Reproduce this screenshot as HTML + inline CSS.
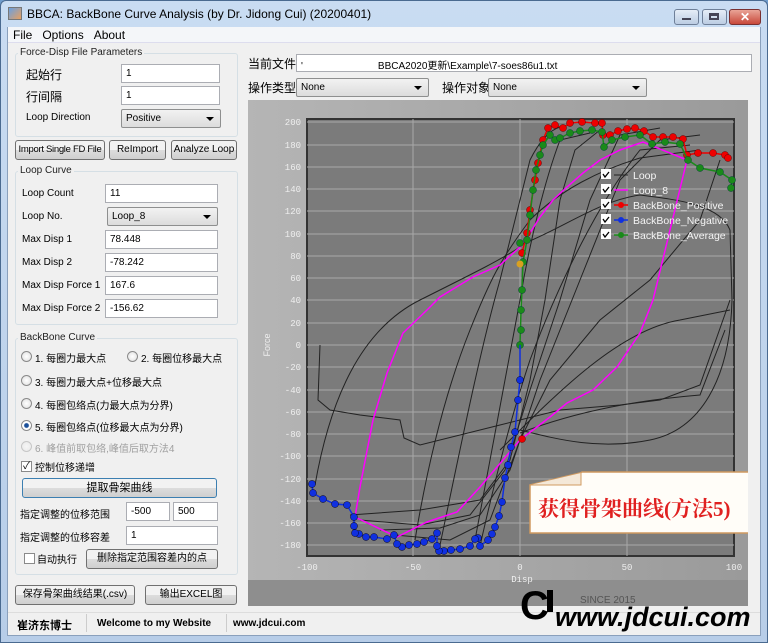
<!DOCTYPE html>
<html><head><meta charset="utf-8"><style>
*{box-sizing:border-box;margin:0;padding:0}
body{width:768px;height:643px;overflow:hidden;background:#6f9ccc;font-family:"Liberation Sans","Noto Sans CJK SC",sans-serif;font-size:11px;color:#000;position:relative}
.a{position:absolute}
.win{left:0;top:0;width:768px;height:643px;background:linear-gradient(#c9dcf2,#b7cde8);border:1px solid #4a6a90;border-radius:6px 6px 0 0}
.client{left:7px;top:27px;width:754px;height:609px;background:#f0f0f0;border:1px solid #8aa0bc}
.inp{position:absolute;background:#fff;border:1px solid #abadb3;height:19px;padding:3px 4px;font-size:10px}
.cmb{position:absolute;border:1px solid #8e8f8f;border-radius:2px;height:19px;padding:3px 4px;font-size:10px;background:linear-gradient(#f2f2f2,#dcdcdc)}
.cmb:after{content:"";position:absolute;right:6px;top:7px;border:4px solid transparent;border-top:4px solid #000}
.btn{position:absolute;border:1px solid #707070;border-radius:3px;background:linear-gradient(#f2f2f2 50%,#dddddd 50%,#cfcfcf);height:20px;text-align:center;line-height:18px;font-size:10px;white-space:nowrap;overflow:hidden}
.grp{position:absolute;border:1px solid #d5dfe5;border-radius:3px}
.gl{position:absolute;background:#f0f0f0;padding:0 2px;font-size:10px;color:#222}
.lb{position:absolute;font-size:10px;white-space:nowrap}
.cn{font-size:12px}
.rd{position:absolute;width:11px;height:11px;border-radius:50%;border:1px solid #8a8a8a;background:radial-gradient(#fff,#ddd)}
.cb{position:absolute;width:11px;height:11px;border:1px solid #8a8a8a;background:#fff}
</style></head><body>
<div class="a win"></div>
<div class="a" style="left:8px;top:7px;width:14px;height:13px;background:linear-gradient(135deg,#6aa0e0,#e8a060);border:1px solid #777"></div>
<div class="a" style="left:27px;top:7px;font-size:12px;color:#000">BBCA: BackBone Curve Analysis (by Dr. Jidong Cui) (20200401)</div>
<div class="a" style="left:674px;top:9px;width:25px;height:16px;border:1px solid #6e7f98;border-radius:3px;background:linear-gradient(#e5edf7,#bccde3)"></div>
<div class="a" style="left:682px;top:18px;width:9px;height:2px;background:#fff;border:1px solid #445"></div>
<div class="a" style="left:702px;top:9px;width:25px;height:16px;border:1px solid #6e7f98;border-radius:3px;background:linear-gradient(#e5edf7,#bccde3)"></div>
<div class="a" style="left:709px;top:13px;width:10px;height:7px;border:2px solid #445;border-top-width:3px"></div>
<div class="a" style="left:729px;top:9px;width:32px;height:16px;border:1px solid #7a3030;border-radius:3px;background:linear-gradient(#e9a497,#c8483a);color:#fff;font-weight:bold;text-align:center;line-height:14px;font-size:12px">✕</div>
<div class="a client"></div>
<div class="a" style="left:8px;top:27px;width:752px;height:16px;background:#f4f6f9;border-bottom:1px solid #dde"></div>
<div class="a" style="left:13px;top:28px;font-size:12px">File&nbsp;&nbsp;&nbsp;Options&nbsp;&nbsp;&nbsp;About</div>

<div class="grp" style="left:15px;top:53px;width:223px;height:84px"></div>
<div class="gl" style="left:18px;top:47px">Force-Disp File Parameters</div>
<div class="lb cn" style="left:26px;top:66px">起始行</div><div class="inp" style="left:121px;top:64px;width:99px">1</div>
<div class="lb cn" style="left:26px;top:88px">行间隔</div><div class="inp" style="left:121px;top:86px;width:99px">1</div>
<div class="lb" style="left:26px;top:112px">Loop Direction</div><div class="cmb" style="left:121px;top:109px;width:100px">Positive</div>
<div class="btn" style="left:15px;top:140px;width:90px;font-size:9.5px;letter-spacing:-0.3px">Import Single FD File</div>
<div class="btn" style="left:109px;top:140px;width:57px">ReImport</div>
<div class="btn" style="left:171px;top:140px;width:66px">Analyze Loop</div>

<div class="grp" style="left:15px;top:171px;width:223px;height:154px"></div>
<div class="gl" style="left:18px;top:165px">Loop Curve</div>
<div class="lb" style="left:22px;top:188px">Loop Count</div><div class="inp" style="left:105px;top:184px;width:113px">11</div>
<div class="lb" style="left:22px;top:211px">Loop No.</div><div class="cmb" style="left:107px;top:207px;width:111px">Loop_8</div>
<div class="lb" style="left:22px;top:234px">Max Disp 1</div><div class="inp" style="left:105px;top:230px;width:113px">78.448</div>
<div class="lb" style="left:22px;top:257px">Max Disp 2</div><div class="inp" style="left:105px;top:253px;width:113px">-78.242</div>
<div class="lb" style="left:22px;top:280px">Max Disp Force 1</div><div class="inp" style="left:105px;top:276px;width:113px">167.6</div>
<div class="lb" style="left:22px;top:303px">Max Disp Force 2</div><div class="inp" style="left:105px;top:299px;width:113px">-156.62</div>

<div class="grp" style="left:15px;top:338px;width:223px;height:237px"></div>
<div class="gl" style="left:18px;top:332px">BackBone Curve</div>
<div class="rd" style="left:21px;top:351px"></div><div class="lb" style="left:35px;top:350px">1. 每圈力最大点</div>
<div class="rd" style="left:127px;top:351px"></div><div class="lb" style="left:141px;top:350px">2. 每圈位移最大点</div>
<div class="rd" style="left:21px;top:375px"></div><div class="lb" style="left:35px;top:374px">3. 每圈力最大点+位移最大点</div>
<div class="rd" style="left:21px;top:398px"></div><div class="lb" style="left:35px;top:397px">4. 每圈包络点(力最大点为分界)</div>
<div class="rd" style="left:21px;top:420px;background:radial-gradient(#1a4f9a 30%,#fff 45%)"></div><div class="lb" style="left:35px;top:419px">5. 每圈包络点(位移最大点为分界)</div>
<div class="rd" style="left:21px;top:441px;opacity:.4"></div><div class="lb" style="left:35px;top:440px;color:#a0a0a0">6. 峰值前取包络,峰值后取方法4</div>
<div class="cb" style="left:21px;top:461px;font-size:10px;line-height:9px;text-align:center">✓</div><div class="lb" style="left:35px;top:459px">控制位移递增</div>
<div class="btn" style="left:22px;top:478px;width:195px;border-color:#3c7fb1;font-size:11px">提取骨架曲线</div>
<div class="lb" style="left:20px;top:506px">指定调整的位移范围</div>
<div class="inp" style="left:126px;top:502px;width:44px">-500</div><div class="inp" style="left:173px;top:502px;width:45px">500</div>
<div class="lb" style="left:20px;top:529px">指定调整的位移容差</div>
<div class="inp" style="left:126px;top:526px;width:92px">1</div>
<div class="cb" style="left:24px;top:553px"></div><div class="lb" style="left:37px;top:551px">自动执行</div>
<div class="btn" style="left:86px;top:549px;width:132px">删除指定范围容差内的点</div>
<div class="btn" style="left:15px;top:585px;width:120px">保存骨架曲线结果(.csv)</div>
<div class="btn" style="left:145px;top:585px;width:92px">输出EXCEL图</div>

<div class="lb cn" style="left:248px;top:55px">当前文件</div>
<div class="inp" style="left:296px;top:54px;width:456px;height:18px;padding:2px 4px">'<span style="margin-left:75px">BBCA2020更新\Example\7-soes86u1.txt</span></div>
<div class="lb cn" style="left:248px;top:79px">操作类型</div>
<div class="cmb" style="left:296px;top:78px;width:133px">None</div>
<div class="lb cn" style="left:442px;top:79px">操作对象</div>
<div class="cmb" style="left:488px;top:78px;width:159px">None</div>

<svg class="a" style="left:248px;top:100px" width="500" height="506" viewBox="248 100 500 506">
<defs><linearGradient id="bg" x1="0" x2="1"><stop offset="0" stop-color="#b5b5b5"/><stop offset="1" stop-color="#9a9a9a"/></linearGradient></defs>
<rect x="248" y="100" width="500" height="506" fill="url(#bg)"/>
<rect x="248" y="580" width="500" height="26" fill="#8e8e8e"/>
<rect x="307" y="119" width="427" height="437" fill="#7b7b7b" stroke="#333" stroke-width="2"/>
<g stroke="#a8a8a8" stroke-width="1">
<line x1="413" y1="119" x2="413" y2="556"/><line x1="520" y1="119" x2="520" y2="556"/><line x1="627" y1="119" x2="627" y2="556"/>
<line x1="307" y1="122" x2="734" y2="122"/><line x1="307" y1="145" x2="734" y2="145"/><line x1="307" y1="167" x2="734" y2="167"/><line x1="307" y1="189" x2="734" y2="189"/><line x1="307" y1="211" x2="734" y2="211"/><line x1="307" y1="234" x2="734" y2="234"/><line x1="307" y1="256" x2="734" y2="256"/><line x1="307" y1="278" x2="734" y2="278"/><line x1="307" y1="300" x2="734" y2="300"/><line x1="307" y1="323" x2="734" y2="323"/><line x1="307" y1="345" x2="734" y2="345"/><line x1="307" y1="367" x2="734" y2="367"/><line x1="307" y1="390" x2="734" y2="390"/><line x1="307" y1="412" x2="734" y2="412"/><line x1="307" y1="434" x2="734" y2="434"/><line x1="307" y1="456" x2="734" y2="456"/><line x1="307" y1="479" x2="734" y2="479"/><line x1="307" y1="501" x2="734" y2="501"/><line x1="307" y1="523" x2="734" y2="523"/><line x1="307" y1="545" x2="734" y2="545"/>
</g>
<g fill="#eee" font-size="9" font-family="Liberation Mono,monospace" text-anchor="end">
<text x="301" y="125">200</text><text x="301" y="148">180</text><text x="301" y="170">160</text><text x="301" y="192">140</text><text x="301" y="214">120</text><text x="301" y="237">100</text><text x="301" y="259">80</text><text x="301" y="281">60</text><text x="301" y="303">40</text><text x="301" y="326">20</text><text x="301" y="348">0</text><text x="301" y="370">-20</text><text x="301" y="393">-40</text><text x="301" y="415">-60</text><text x="301" y="437">-80</text><text x="301" y="459">-100</text><text x="301" y="482">-120</text><text x="301" y="504">-140</text><text x="301" y="526">-160</text><text x="301" y="548">-180</text>
</g>
<g fill="#eee" font-size="9" font-family="Liberation Mono,monospace" text-anchor="middle">
<text x="307" y="570">-100</text><text x="413" y="570">-50</text><text x="520" y="570">0</text><text x="627" y="570">50</text><text x="734" y="570">100</text><text x="522" y="582">Disp</text>
</g>
<text x="270" y="345" fill="#eee" font-size="9" transform="rotate(-90 270 345)" text-anchor="middle">Force</text>
<g fill="none" stroke="#222" stroke-width="1">
<path d="M320,345 L318,400 L330,410 L360,415 L400,420 L404,438 L420,445 L500,425 L560,410 L620,405 L660,400 L700,385 L730,300"/>
<path d="M315,485 C330,400 360,330 420,300 C480,270 500,260 520,247"/>
<path d="M350,515 L420,510 L480,500 L510,460 L530,380 L545,300 L560,200 L575,150 L600,130"/>
<path d="M360,520 L420,525 L470,515 L505,470 L530,390 L560,300 L590,200 L620,135 L660,128"/>
<path d="M380,530 L440,528 L480,515 L510,470 L540,380 L580,280 L620,180 L660,140 L700,135"/>
<path d="M395,535 L450,540 L490,520 L520,440 L550,380 L600,320 L650,280 L700,220 L720,160"/>
<path d="M440,545 C460,450 480,350 500,280 C510,240 520,200 530,160 C540,140 550,130 560,127"/>
<path d="M475,540 C490,460 505,380 520,300 C530,240 545,180 560,140 L590,133"/>
<path d="M480,546 C495,480 510,420 530,360 C560,280 600,200 640,150 L690,145"/>
<path d="M415,540 C430,450 450,380 470,330 C490,280 500,260 530,220 C560,190 600,170 640,158 L700,150"/>
<path d="M520,245 C560,230 600,200 640,195 C680,200 720,205 730,230 L732,300 C730,380 700,430 650,440 C600,450 560,440 520,430"/>
<path d="M500,450 C560,390 620,330 680,320 L730,310"/>
<path d="M520,433 C580,410 640,400 700,395 L725,330"/>
</g>
<polyline fill="none" stroke="#ff00ff" stroke-width="1.5" points="520,247 530,233 540,217 553,200 567,187 583,173 600,160 620,150 643,142 687,160 653,300 640,333 617,367 593,390 567,403 550,417 533,430 520,440 503,460 480,487 457,512 427,522 397,537 355,517 360,487 373,420 387,373 403,333 427,310 440,297 473,277 500,265 520,247"/>
<g fill="#e00" stroke="#600" stroke-width=".5">
<polyline fill="none" stroke="#e00" stroke-width="1.5" points="522,253 527,233 530,210 535,180 538,163 543,140 548,128 555,125 563,128 570,123 582,122 595,123 602,123 603,135 610,135 618,131 627,129 635,128 644,131 653,137 663,137 673,137 683,139 687,155 698,153 713,153 725,155 728,158"/>
<circle cx="522" cy="253" r="3.5"/><circle cx="527" cy="233" r="3.5"/><circle cx="530" cy="210" r="3.5"/><circle cx="535" cy="180" r="3.5"/><circle cx="538" cy="163" r="3.5"/><circle cx="543" cy="140" r="3.5"/><circle cx="548" cy="128" r="3.5"/><circle cx="555" cy="125" r="3.5"/><circle cx="563" cy="128" r="3.5"/><circle cx="570" cy="123" r="3.5"/><circle cx="582" cy="122" r="3.5"/><circle cx="595" cy="123" r="3.5"/><circle cx="602" cy="123" r="3.5"/><circle cx="603" cy="135" r="3.5"/><circle cx="610" cy="135" r="3.5"/><circle cx="618" cy="131" r="3.5"/><circle cx="627" cy="129" r="3.5"/><circle cx="635" cy="128" r="3.5"/><circle cx="644" cy="131" r="3.5"/><circle cx="653" cy="137" r="3.5"/><circle cx="663" cy="137" r="3.5"/><circle cx="673" cy="137" r="3.5"/><circle cx="683" cy="139" r="3.5"/><circle cx="687" cy="155" r="3.5"/><circle cx="698" cy="153" r="3.5"/><circle cx="713" cy="153" r="3.5"/><circle cx="725" cy="155" r="3.5"/><circle cx="728" cy="158" r="3.5"/><circle cx="522" cy="439" r="3.5"/>
</g>
<g fill="#1a8a1a" stroke="#043" stroke-width=".5">
<polyline fill="none" stroke="#1a8a1a" stroke-width="1.5" points="520,345 521,310 522,290 523,262 527,240 530,215 533,190 536,170 540,155 543,145 550,135 555,140 560,138 570,133 580,131 592,130 602,132 604,147 612,140 625,137 640,135 652,144 665,142 680,144 688,160 700,168 720,172 732,180 731,188"/>
<circle cx="520" cy="345" r="3.5"/><circle cx="521" cy="330" r="3.5"/><circle cx="521" cy="310" r="3.5"/><circle cx="522" cy="290" r="3.5"/><circle cx="523" cy="262" r="3.5"/><circle cx="527" cy="240" r="3.5"/><circle cx="530" cy="215" r="3.5"/><circle cx="533" cy="190" r="3.5"/><circle cx="536" cy="170" r="3.5"/><circle cx="540" cy="155" r="3.5"/><circle cx="543" cy="145" r="3.5"/><circle cx="550" cy="135" r="3.5"/><circle cx="555" cy="140" r="3.5"/><circle cx="560" cy="138" r="3.5"/><circle cx="570" cy="133" r="3.5"/><circle cx="580" cy="131" r="3.5"/><circle cx="592" cy="130" r="3.5"/><circle cx="602" cy="132" r="3.5"/><circle cx="604" cy="147" r="3.5"/><circle cx="612" cy="140" r="3.5"/><circle cx="625" cy="137" r="3.5"/><circle cx="640" cy="135" r="3.5"/><circle cx="652" cy="144" r="3.5"/><circle cx="665" cy="142" r="3.5"/><circle cx="680" cy="144" r="3.5"/><circle cx="688" cy="160" r="3.5"/><circle cx="700" cy="168" r="3.5"/><circle cx="720" cy="172" r="3.5"/><circle cx="732" cy="180" r="3.5"/><circle cx="731" cy="188" r="3.5"/><circle cx="520" cy="243" r="3.5"/>
</g>
<circle cx="520" cy="264" r="3.5" fill="#d8a020"/>
<g fill="#1030e0" stroke="#002" stroke-width=".5">
<polyline fill="none" stroke="#1030e0" stroke-width="1.5" points="520,345 520,380 518,400 515,432 511,447 508,465 505,478 502,502 499,516 495,527 492,534 488,540 480,546 478,538 475,539 470,546 460,549 451,550 444,551 439,551 437,546 437,533 432,539 424,542 417,544 409,545 402,547 397,544 394,535 387,539 374,537 366,537 359,534 355,533 354,526 354,517 347,505 335,504 323,499 313,493 312,484"/>
<circle cx="520" cy="380" r="3.5"/><circle cx="518" cy="400" r="3.5"/><circle cx="515" cy="432" r="3.5"/><circle cx="511" cy="447" r="3.5"/><circle cx="508" cy="465" r="3.5"/><circle cx="505" cy="478" r="3.5"/><circle cx="502" cy="502" r="3.5"/><circle cx="499" cy="516" r="3.5"/><circle cx="495" cy="527" r="3.5"/><circle cx="492" cy="534" r="3.5"/><circle cx="488" cy="540" r="3.5"/><circle cx="480" cy="546" r="3.5"/><circle cx="478" cy="538" r="3.5"/><circle cx="475" cy="539" r="3.5"/><circle cx="470" cy="546" r="3.5"/><circle cx="460" cy="549" r="3.5"/><circle cx="451" cy="550" r="3.5"/><circle cx="444" cy="551" r="3.5"/><circle cx="439" cy="551" r="3.5"/><circle cx="437" cy="546" r="3.5"/><circle cx="437" cy="533" r="3.5"/><circle cx="432" cy="539" r="3.5"/><circle cx="424" cy="542" r="3.5"/><circle cx="417" cy="544" r="3.5"/><circle cx="409" cy="545" r="3.5"/><circle cx="402" cy="547" r="3.5"/><circle cx="397" cy="544" r="3.5"/><circle cx="394" cy="535" r="3.5"/><circle cx="387" cy="539" r="3.5"/><circle cx="374" cy="537" r="3.5"/><circle cx="366" cy="537" r="3.5"/><circle cx="359" cy="534" r="3.5"/><circle cx="355" cy="533" r="3.5"/><circle cx="354" cy="526" r="3.5"/><circle cx="354" cy="517" r="3.5"/><circle cx="347" cy="505" r="3.5"/><circle cx="335" cy="504" r="3.5"/><circle cx="323" cy="499" r="3.5"/><circle cx="313" cy="493" r="3.5"/><circle cx="312" cy="484" r="3.5"/>
</g>
<g font-size="10.5" fill="#f4f4f4" font-family="Liberation Sans,sans-serif" transform="translate(0,40)">
<rect x="601" y="129" width="10" height="10" fill="#fff"/><rect x="601" y="144" width="10" height="10" fill="#fff"/><rect x="601" y="159" width="10" height="10" fill="#fff"/><rect x="601" y="174" width="10" height="10" fill="#fff"/><rect x="601" y="189" width="10" height="10" fill="#fff"/>
<line x1="614" y1="135" x2="628" y2="135" stroke="#222"/><text x="633" y="139">Loop</text>
<line x1="614" y1="150" x2="628" y2="150" stroke="#f0f" stroke-width="1.5"/><text x="633" y="154">Loop_8</text>
<line x1="614" y1="165" x2="628" y2="165" stroke="#e00" stroke-width="1.5"/><circle cx="621" cy="165" r="3" fill="#e00"/><text x="633" y="169">BackBone_Positive</text>
<line x1="614" y1="180" x2="628" y2="180" stroke="#1030e0" stroke-width="1.5"/><circle cx="621" cy="180" r="3" fill="#1030e0"/><text x="633" y="184">BackBone_Negative</text>
<line x1="614" y1="195" x2="628" y2="195" stroke="#1a8a1a" stroke-width="1.5"/><circle cx="621" cy="195" r="3" fill="#1a8a1a"/><text x="633" y="199">BackBone_Average</text>
<g stroke="#000" stroke-width="1.3" fill="none"><path d="M603,134 l2,3 l4,-5"/><path d="M603,149 l2,3 l4,-5"/><path d="M603,164 l2,3 l4,-5"/><path d="M603,179 l2,3 l4,-5"/><path d="M603,194 l2,3 l4,-5"/></g>
</g>
<path d="M530,485 L580,473 L582,472 L750,472 L750,533 L530,533 Z" fill="#fffdf8" stroke="#d09a60" stroke-width="1.5"/>
<path d="M530,485 L581,485 L581,473" fill="#f4e8d8" stroke="#d09a60"/>
<text x="538" y="516" fill="#e02020" font-size="21" font-weight="bold" font-family="Liberation Serif,Noto Serif CJK SC,serif">获得骨架曲线(方法5)</text>
</svg>

<div class="a" style="left:8px;top:612px;width:752px;height:22px;background:#f0f0f0;border-top:1px solid #ddd"></div>
<div class="a" style="left:86px;top:614px;width:1px;height:18px;background:#ccc"></div>
<div class="a" style="left:226px;top:614px;width:1px;height:18px;background:#ccc"></div>
<div class="a" style="left:17px;top:617px;font-weight:bold;font-size:11px">崔济东博士</div>
<div class="a" style="left:97px;top:618px;font-weight:bold;font-size:10px">Welcome to my Website</div>
<div class="a" style="left:233px;top:618px;font-weight:bold;font-size:10px">www.jdcui.com</div>
<div class="a" style="left:580px;top:595px;font-size:10px;color:#555">SINCE 2015</div>
<div class="a" style="left:520px;top:584px;font-size:40px;font-weight:bold;line-height:44px;font-family:'Liberation Sans',sans-serif">C</div>
<div class="a" style="left:547px;top:590px;width:6px;height:22px;background:#000"></div>
<div class="a" style="left:555px;top:602px;font-size:27px;font-weight:bold;font-style:italic;line-height:30px;letter-spacing:0;font-family:'Liberation Sans',sans-serif">www.jdcui.com</div>
</body></html>
